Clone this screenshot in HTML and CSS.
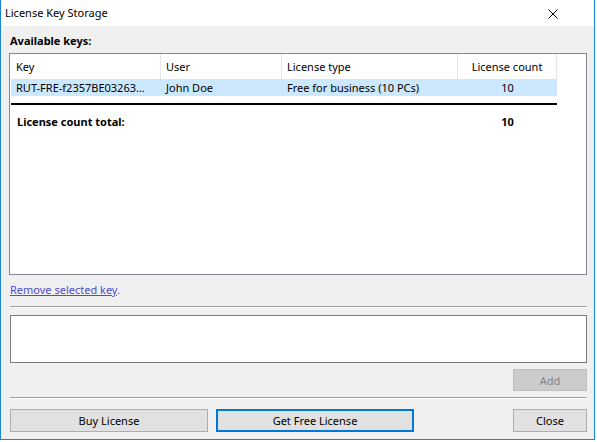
FILE: index.html
```html
<!DOCTYPE html>
<html>
<head>
<meta charset="utf-8">
<link rel="stylesheet" href="styles.css">
</head>
<body>
<div class="window">
  <div class="titlebar">
    <span class="title">License Key Storage</span>
    <svg class="close-x" width="10" height="10" viewBox="0 0 10 10"><path d="M0.5 0.5 L9.5 9.5 M9.5 0.5 L0.5 9.5" stroke="#000" stroke-width="1" fill="none"/></svg>
  </div>
  <div class="content">
    <div class="section-label">Available keys:</div>
    <div class="listbox">
      <div class="row header">
        <div class="cell c-key">Key</div>
        <div class="cell c-user">User</div>
        <div class="cell c-type">License type</div>
        <div class="cell c-count">License count</div>
      </div>
      <div class="row selected">
        <div class="cell c-key">RUT-FRE-f2357BE03263…</div>
        <div class="cell c-user">John Doe</div>
        <div class="cell c-type">Free for business (10 PCs)</div>
        <div class="cell c-count">10</div>
      </div>
      <div class="total-line"></div>
      <div class="row total">
        <div class="cell c-total-label">License count total:</div>
        <div class="cell c-count">10</div>
      </div>
    </div>
    <div class="link-row"><a class="link">Remove selected key</a>.</div>
    <div class="separator"></div>
    <div class="textbox"></div>
    <div class="add-row"><button class="btn disabled">Add</button></div>
    <div class="separator sep2"></div>
    <div class="button-row">
      <button class="btn wide">Buy License</button>
      <button class="btn wide focused">Get Free License</button>
      <span class="spacer"></span>
      <button class="btn">Close</button>
    </div>
  </div>
</div>
</body>
</html>
```
FILE: styles.css
```css
html, body {
  margin: 0;
  padding: 0;
  background: #ffffff;
}
body {
  font-family: "Noto Sans", "Open Sans", sans-serif;
  font-size: 11px;
  color: #000;
}
.window {
  width: 595px;
  height: 440px;
  box-sizing: border-box;
  border-left: 1px solid #1883d7;
  border-right: 1px solid #1883d7;
  border-bottom: 1px solid #1883d7;
  background: #f0f0f0;
  display: flex;
  flex-direction: column;
}
.titlebar {
  height: 26px;
  background: #ffffff;
  display: flex;
  align-items: center;
  padding: 0 0 2px 4px;
  box-sizing: border-box;
}
.title {
  flex: 1;
  font-size: 11px;
}
.close-x {
  margin-right: 36px;
  margin-top: 4px;
}
.content {
  padding: 0 7px 0 8px;
  display: flex;
  flex-direction: column;
}
.section-label {
  font-weight: bold;
  height: 27px;
  line-height: 29px;
  padding-left: 1px;
}
.listbox {
  height: 222px;
  box-sizing: border-box;
  border: 1px solid #828790;
  background: #fff;
  padding-left: 1px;
}
.row {
  display: flex;
  width: 546px;
}
.cell {
  box-sizing: border-box;
  white-space: nowrap;
  overflow: hidden;
}
.c-key { width: 150px; padding-left: 5px; }
.c-user { width: 121px; padding-left: 5px; }
.c-type { width: 176px; padding-left: 5px; }
.c-count { width: 99px; text-align: center; }
.header {
  height: 25px;
  line-height: 26px;
}
.header .cell {
  border-right: 1px solid #e5e5e5;
}
.selected {
  height: 17px;
  line-height: 17px;
  background: #cce8ff;
}
.total-line {
  width: 546px;
  height: 2px;
  background: #000;
  margin-top: 7px;
}
.total {
  font-weight: bold;
  height: 20px;
  line-height: 20px;
  margin-top: 7px;
}
.c-total-label {
  width: 447px;
  padding-left: 6px;
}
.link-row {
  height: 30px;
  line-height: 29px;
  color: #5a5abf;
  padding-left: 1px;
}
.link {
  color: #4d4dc9;
  text-decoration: underline;
}
.separator {
  height: 1px;
  background: #a0a0a0;
  border-bottom: 1px solid #ffffff;
  margin-top: 1px;
  margin-left: 1px;
}
.textbox {
  margin-top: 7px;
  height: 48px;
  box-sizing: border-box;
  border: 1px solid #7a7a7a;
  background: #fff;
  margin-left: 1px;
}
.add-row {
  display: flex;
  justify-content: flex-end;
  margin-top: 6px;
  height: 22px;
}
.sep2 {
  margin-top: 6px;
}
.button-row {
  display: flex;
  margin-top: 10px;
  padding-left: 1px;
}
.btn {
  font-family: inherit;
  font-size: 11px;
  width: 74px;
  height: 23px;
  box-sizing: border-box;
  border: 1px solid #adadad;
  background: #e1e1e1;
  color: #000;
  padding: 0;
  margin: 0;
}
.add-row .btn {
  height: 22px;
}
.btn.disabled {
  background: #cccccc;
  border-color: #bfbfbf;
  color: #838383;
}
.btn.wide {
  width: 198px;
}
.btn.wide + .btn.wide {
  margin-left: 8px;
}
.btn.focused {
  border: 2px solid #0078d7;
}
.spacer {
  flex: 1;
}
```
